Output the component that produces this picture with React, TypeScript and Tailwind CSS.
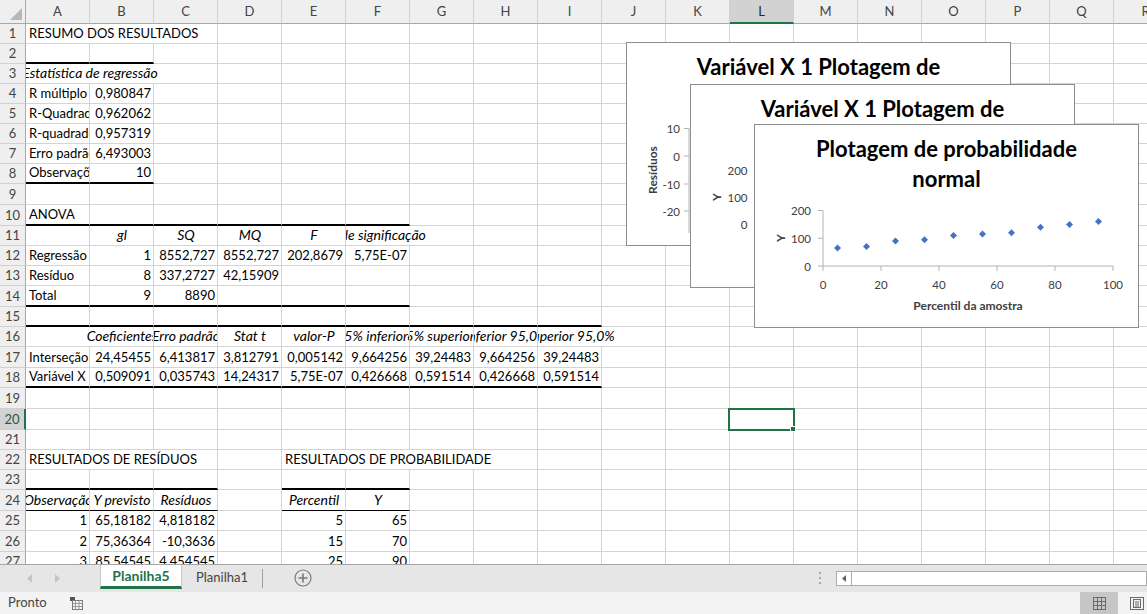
import React from 'react';

type Align = 'l' | 'r' | 'c';
type Edge = 'none' | 'thin' | 'thick';

interface CellDef {
  c: number; // first column, 0 = A
  t: string;
  a: Align;
  i?: boolean;
  span?: number; // columns the cell covers on screen (overflow)
  off?: number; // centred box offset inside the span, in columns
  w?: number; // centred box width, in columns
}

const COLS = 'ABCDEFGHIJKLMNOPQR'.split('');
const ROW_H = [20, 20, 20, 20, 20, 20, 20, 20, 21, 21, 20, 20, 20, 21, 20, 20, 21, 20, 21, 21, 20, 20, 20, 21, 20, 21, 20];
const H_CLASS: Record<number, string> = { 20: 'h-[20px]', 21: 'h-[21px]' };
const SPAN_W: Record<number, string> = { 1: 'w-[64px]', 2: 'w-[128px]', 3: 'w-[192px]', 4: 'w-[256px]' };
const BOTTOM: Record<Edge, string> = {
  none: 'border-b border-b-[#d4d4d4]',
  thin: 'border-b border-b-black',
  thick: 'border-b-2 border-b-black',
};

const L = (c: number, t: string, span?: number): CellDef => ({ c, t, a: 'l', span });
const R = (c: number, t: string): CellDef => ({ c, t, a: 'r' });
const C = (c: number, t: string, extra: Partial<CellDef> = {}): CellDef => ({ c, t, a: 'c', i: true, ...extra });

const ROWS: CellDef[][] = [
  [L(0, 'RESUMO DOS RESULTADOS', 3)],
  [],
  [C(0, 'Estatística de regressão', { span: 3, w: 2 })],
  [L(0, 'R múltiplo'), R(1, '0,980847')],
  [L(0, 'R-Quadrado'), R(1, '0,962062')],
  [L(0, 'R-quadrado ajustado'), R(1, '0,957319')],
  [L(0, 'Erro padrão'), R(1, '6,493003')],
  [L(0, 'Observações'), R(1, '10')],
  [],
  [L(0, 'ANOVA')],
  [C(1, 'gl'), C(2, 'SQ'), C(3, 'MQ'), C(4, 'F'), C(5, 'F de significação', { span: 2 })],
  [L(0, 'Regressão'), R(1, '1'), R(2, '8552,727'), R(3, '8552,727'), R(4, '202,8679'), R(5, '5,75E-07')],
  [L(0, 'Resíduo'), R(1, '8'), R(2, '337,2727'), R(3, '42,15909')],
  [L(0, 'Total'), R(1, '9'), R(2, '8890')],
  [],
  [
    C(0, 'Coeficientes', { span: 2, off: 1 }),
    C(2, 'Erro padrão'),
    C(3, 'Stat t'),
    C(4, 'valor-P'),
    C(5, '95% inferiores'),
    C(6, '95% superiores'),
    C(7, 'Inferior 95,0%'),
    C(8, 'Superior 95,0%', { span: 2 }),
  ],
  [L(0, 'Interseção'), R(1, '24,45455'), R(2, '6,413817'), R(3, '3,812791'), R(4, '0,005142'), R(5, '9,664256'), R(6, '39,24483'), R(7, '9,664256'), R(8, '39,24483')],
  [L(0, 'Variável X 1'), R(1, '0,509091'), R(2, '0,035743'), R(3, '14,24317'), R(4, '5,75E-07'), R(5, '0,426668'), R(6, '0,591514'), R(7, '0,426668'), R(8, '0,591514')],
  [],
  [],
  [],
  [L(0, 'RESULTADOS DE RESÍDUOS', 3), L(4, 'RESULTADOS DE PROBABILIDADE', 4)],
  [],
  [C(0, 'Observação'), C(1, 'Y previsto'), C(2, 'Resíduos'), C(4, 'Percentil'), C(5, 'Y')],
  [R(0, '1'), R(1, '65,18182'), R(2, '4,818182'), R(4, '5'), R(5, '65')],
  [R(0, '2'), R(1, '75,36364'), R(2, '-10,3636'), R(4, '15'), R(5, '70')],
  [R(0, '3'), R(1, '85,54545'), R(2, '4,454545'), R(4, '25'), R(5, '90')],
];

// bottom borders of a row: [row number, first col, last col, kind]
const EDGES: [number, number, number, Edge][] = [
  [2, 0, 1, 'thick'],
  [8, 0, 1, 'thick'],
  [10, 0, 5, 'thick'],
  [14, 0, 5, 'thick'],
  [15, 0, 8, 'thick'],
  [18, 0, 8, 'thick'],
  [23, 0, 2, 'thick'],
  [23, 4, 5, 'thick'],
  [24, 0, 2, 'thin'],
  [24, 4, 5, 'thin'],
];

const edgeFor = (row: number, col: number): Edge => {
  const hit = EDGES.find(([r, a, b]) => r === row && col >= a && col <= b);
  return hit ? hit[3] : 'none';
};

const SEL_COL = 11; // L
const SEL_ROW = 20;

function CellText({ cell }: { cell: CellDef }) {
  return (
    <span className={`shrink-0 whitespace-nowrap pb-[1px] leading-[18px] text-black ${cell.i ? 'text-[14px] italic' : 'text-[13px]'}`}>
      {cell.t}
    </span>
  );
}

function GridCell({ cell, span, bottom }: { cell?: CellDef; span: number; bottom: Edge }) {
  const justify = !cell || cell.a === 'l' ? 'justify-start pl-[3px]' : cell.a === 'r' ? 'justify-end pr-[2px]' : 'justify-start';
  return (
    <div className={`flex shrink-0 items-end overflow-hidden border-r border-r-[#d4d4d4] ${SPAN_W[span]} ${BOTTOM[bottom]} ${justify}`}>
      {cell &&
        (cell.a === 'c' ? (
          <div className={`flex shrink-0 justify-center ${SPAN_W[cell.w ?? 1]} ${cell.off ? 'ml-[64px]' : ''}`}>
            <CellText cell={cell} />
          </div>
        ) : (
          <CellText cell={cell} />
        ))}
    </div>
  );
}

function SheetRow({ n, cells }: { n: number; cells: CellDef[] }) {
  const out: React.ReactNode[] = [];
  let col = 0;
  while (col < COLS.length) {
    const cell = cells.find((c) => c.c === col);
    const span = cell?.span ?? 1;
    out.push(<GridCell key={col} cell={cell} span={span} bottom={edgeFor(n, col)} />);
    col += span;
  }
  const selected = n === SEL_ROW;
  return (
    <div className={`flex shrink-0 ${H_CLASS[ROW_H[n - 1]]}`}>
      <div
        className={`relative z-10 flex w-[26px] shrink-0 items-end justify-center border-b border-b-[#d0d0d0] text-[13px] ${
          selected ? 'border-r-2 border-r-[#217346] bg-[#d2d2d2] text-[#1f5c38]' : 'border-r border-r-[#a8a8a8] bg-[#efefef] text-[#444]'
        }`}
      >
        <span className="pb-[1px] leading-[18px]">{n}</span>
      </div>
      {out}
    </div>
  );
}

function HeaderRow() {
  return (
    <div className="flex h-[24px] shrink-0">
      <div className="flex w-[26px] shrink-0 border-r border-b border-[#a8a8a8] bg-[#efefef]">
        <svg width="25" height="23" viewBox="0 0 25 23">
          <polygon points="22,8 22,20 10,20" fill="#b7b7b7" />
        </svg>
      </div>
      {COLS.map((c, i) => (
        <div
          key={c}
          className={`flex w-[64px] shrink-0 items-center justify-center border-r border-r-[#d0d0d0] pt-[1px] text-[13px] ${
            i === SEL_COL ? 'border-b-2 border-b-[#217346] bg-[#d2d2d2] text-[#262626]' : 'border-b border-b-[#a8a8a8] bg-[#efefef] text-[#444]'
          }`}
        >
          {c}
        </div>
      ))}
    </div>
  );
}

const AX = '#b3b3b3';
const LBL = '#404040';

function ChartTitle({ children }: { children: React.ReactNode }) {
  return <div className="relative pt-[9px] text-center text-[22px] font-bold leading-[30px] text-black">{children}</div>;
}

function ResidualChart() {
  const ys = [
    ['10', 85.5],
    ['0', 113],
    ['-10', 141],
    ['-20', 168],
  ] as const;
  return (
    <div className="absolute left-[626px] top-[42px] h-[204px] w-[385px] border border-[#8e8e8e] bg-white">
      <svg className="absolute inset-0" width="383" height="202">
        <line x1="62" y1="85.5" x2="62" y2="190" stroke={AX} />
        {ys.map(([t, y]) => (
          <g key={t}>
            <line x1="57" y1={y} x2="62" y2={y} stroke={AX} />
            <text x="53" y={y} textAnchor="end" dominantBaseline="central" fontSize="11.5" fill={LBL}>
              {t}
            </text>
          </g>
        ))}
        <text x="25" y="127" transform="rotate(-90 25 127)" textAnchor="middle" dominantBaseline="central" fontSize="12" fontWeight="bold" fill={LBL}>
          Resíduos
        </text>
      </svg>
      <ChartTitle>
        Variável X 1 Plotagem de
        <br />
        resíduos
      </ChartTitle>
    </div>
  );
}

function LineFitChart() {
  const ys = [
    ['200', 85],
    ['100', 112.5],
    ['0', 139.5],
  ] as const;
  return (
    <div className="absolute left-[690px] top-[84px] h-[204px] w-[385px] border border-[#8e8e8e] bg-white">
      <svg className="absolute inset-0" width="383" height="202">
        {ys.map(([t, y]) => (
          <text key={t} x="56.5" y={y} textAnchor="end" dominantBaseline="central" fontSize="11.5" fill={LBL}>
            {t}
          </text>
        ))}
        <text x="25" y="112" transform="rotate(-90 25 112)" textAnchor="middle" dominantBaseline="central" fontSize="12" fontWeight="bold" fill={LBL}>
          Y
        </text>
      </svg>
      <ChartTitle>
        Variável X 1 Plotagem de
        <br />
        ajuste de linha
      </ChartTitle>
    </div>
  );
}

const PROB = [
  [5, 65],
  [15, 70],
  [25, 90],
  [35, 95],
  [45, 110],
  [55, 115],
  [65, 120],
  [75, 140],
  [85, 150],
  [95, 160],
];

function ProbabilityChart() {
  const x0 = 68;
  const x1 = 358;
  const y0 = 141;
  const yTop = 85.5;
  const px = (p: number) => x0 + (p * (x1 - x0)) / 100;
  const py = (v: number) => y0 - (v * (y0 - yTop)) / 200;
  return (
    <div className="absolute left-[754px] top-[124px] h-[204px] w-[385px] border border-[#8e8e8e] bg-white">
      <svg className="absolute inset-0" width="383" height="202">
        <line x1={x0} y1={yTop} x2={x0} y2={y0} stroke={AX} />
        <line x1={x0} y1={y0} x2={x1} y2={y0} stroke={AX} />
        {[0, 100, 200].map((v) => (
          <g key={v}>
            <line x1={x0 - 5} y1={py(v)} x2={x0} y2={py(v)} stroke={AX} />
            <text x="56" y={py(v)} textAnchor="end" dominantBaseline="central" fontSize="11.5" fill={LBL}>
              {v}
            </text>
          </g>
        ))}
        {[0, 20, 40, 60, 80, 100].map((p) => (
          <g key={p}>
            <line x1={px(p)} y1={y0} x2={px(p)} y2={y0 + 5} stroke={AX} />
            <text x={px(p)} y="159" textAnchor="middle" dominantBaseline="central" fontSize="11.5" fill={LBL}>
              {p}
            </text>
          </g>
        ))}
        {PROB.map(([p, v]) => {
          const x = px(p);
          const y = py(v);
          return <polygon key={p} points={`${x},${y - 3.5} ${x + 3.5},${y} ${x},${y + 3.5} ${x - 3.5},${y}`} fill="#4472c4" />;
        })}
        <text x="25" y="113" transform="rotate(-90 25 113)" textAnchor="middle" dominantBaseline="central" fontSize="12" fontWeight="bold" fill={LBL}>
          Y
        </text>
        <text x="213" y="180" textAnchor="middle" dominantBaseline="central" fontSize="12" fontWeight="bold" fill={LBL}>
          Percentil da amostra
        </text>
      </svg>
      <ChartTitle>
        Plotagem de probabilidade
        <br />
        normal
      </ChartTitle>
    </div>
  );
}

function SheetTabs() {
  return (
    <div className="flex h-[28px] shrink-0 items-start border-t border-[#a6a6a6] bg-[#e6e6e6] text-[13px]">
      <div className="flex h-[26px] w-[100px] shrink-0 items-center">
        <svg className="ml-[27px]" width="5" height="9" viewBox="0 0 5 9">
          <polygon points="5,0 5,9 0,4.5" fill="#c4c4c4" />
        </svg>
        <svg className="ml-[23px]" width="5" height="9" viewBox="0 0 5 9">
          <polygon points="0,0 0,9 5,4.5" fill="#c4c4c4" />
        </svg>
      </div>
      <div className="flex h-[24px] w-[82px] shrink-0 items-center justify-center border-x border-x-[#c8c8c8] border-b-[3px] border-b-[#217346] bg-white text-[14px] font-bold text-[#217346]">
        Planilha5
      </div>
      <div className="flex h-[26px] w-[80px] shrink-0 items-center pl-[14px] text-[#444]">Planilha1</div>
      <div className="mt-[4px] h-[19px] w-px shrink-0 bg-[#a0a0a0]" />
      <div className="ml-[31px] flex h-[26px] items-center">
        <svg width="18" height="18" viewBox="0 0 18 18">
          <circle cx="9" cy="9" r="8" fill="none" stroke="#7a7a7a" strokeWidth="1.2" />
          <path d="M9 4.5v9M4.5 9h9" stroke="#7a7a7a" strokeWidth="1.6" />
        </svg>
      </div>
      <div className="ml-auto flex h-[26px] items-center">
        <svg className="mr-[14px]" width="4" height="14" viewBox="0 0 4 14">
          <rect x="1" y="1" width="2" height="2" fill="#a8a8a8" />
          <rect x="1" y="6" width="2" height="2" fill="#a8a8a8" />
          <rect x="1" y="11" width="2" height="2" fill="#a8a8a8" />
        </svg>
        <div className="flex h-[15px] w-[311px] border border-[#ababab] bg-white">
          <div className="flex w-[15px] items-center justify-center border-r border-[#ababab]">
            <svg width="4" height="7" viewBox="0 0 4 7">
              <polygon points="4,0 4,7 0,3.5" fill="#606060" />
            </svg>
          </div>
        </div>
      </div>
    </div>
  );
}

function StatusBar() {
  return (
    <div className="flex h-[22px] shrink-0 items-stretch bg-[#f3f3f3] text-[13px] text-[#444]">
      <div className="flex items-center pl-[8px]">Pronto</div>
      <div className="ml-[23px] flex items-center">
        <svg width="13" height="13" viewBox="0 0 13 13">
          <rect x="0" y="0" width="5" height="4" fill="#555" />
          <rect x="2.5" y="3.5" width="10" height="9" fill="none" stroke="#777" />
          <path d="M2.5 6.5h10M2.5 9.5h10M5.5 3.5v9M9 3.5v9" stroke="#999" />
        </svg>
      </div>
      <div className="ml-auto flex w-[38px] items-center justify-center bg-[#c6c6c6]">
        <svg width="13" height="13" viewBox="0 0 13 13">
          <rect x="0.5" y="0.5" width="12" height="12" fill="none" stroke="#6b6b6b" />
          <path d="M4.5 0.5v12M8.5 0.5v12M0.5 4.5h12M0.5 8.5h12" stroke="#6b6b6b" />
        </svg>
      </div>
      <div className="flex w-[29px] items-center justify-end pr-[3px]">
        <svg width="14" height="13" viewBox="0 0 14 13">
          <rect x="0.5" y="0.5" width="13" height="12" fill="none" stroke="#6b6b6b" />
          <rect x="3.5" y="2.5" width="7" height="8" fill="none" stroke="#6b6b6b" />
          <path d="M5 5h4M5 7h4M5 9h4" stroke="#6b6b6b" />
        </svg>
      </div>
    </div>
  );
}

export default function App() {
  return (
    <div className="flex h-[614px] w-[1147px] flex-col overflow-hidden bg-white font-['Lato','Liberation_Sans',sans-serif]">
      <div className="relative h-[564px] shrink-0 overflow-hidden">
        <HeaderRow />
        {ROWS.map((cells, i) => (
          <SheetRow key={i} n={i + 1} cells={cells} />
        ))}
        <ResidualChart />
        <LineFitChart />
        <ProbabilityChart />
        {/* selected cell L20 */}
        <div className="absolute left-[728px] top-[408px] h-[23px] w-[67px] border-2 border-[#217346]" />
        <div className="absolute left-[790px] top-[426px] h-[6px] w-[6px] border border-white bg-[#217346]" />
      </div>
      <SheetTabs />
      <StatusBar />
    </div>
  );
}
